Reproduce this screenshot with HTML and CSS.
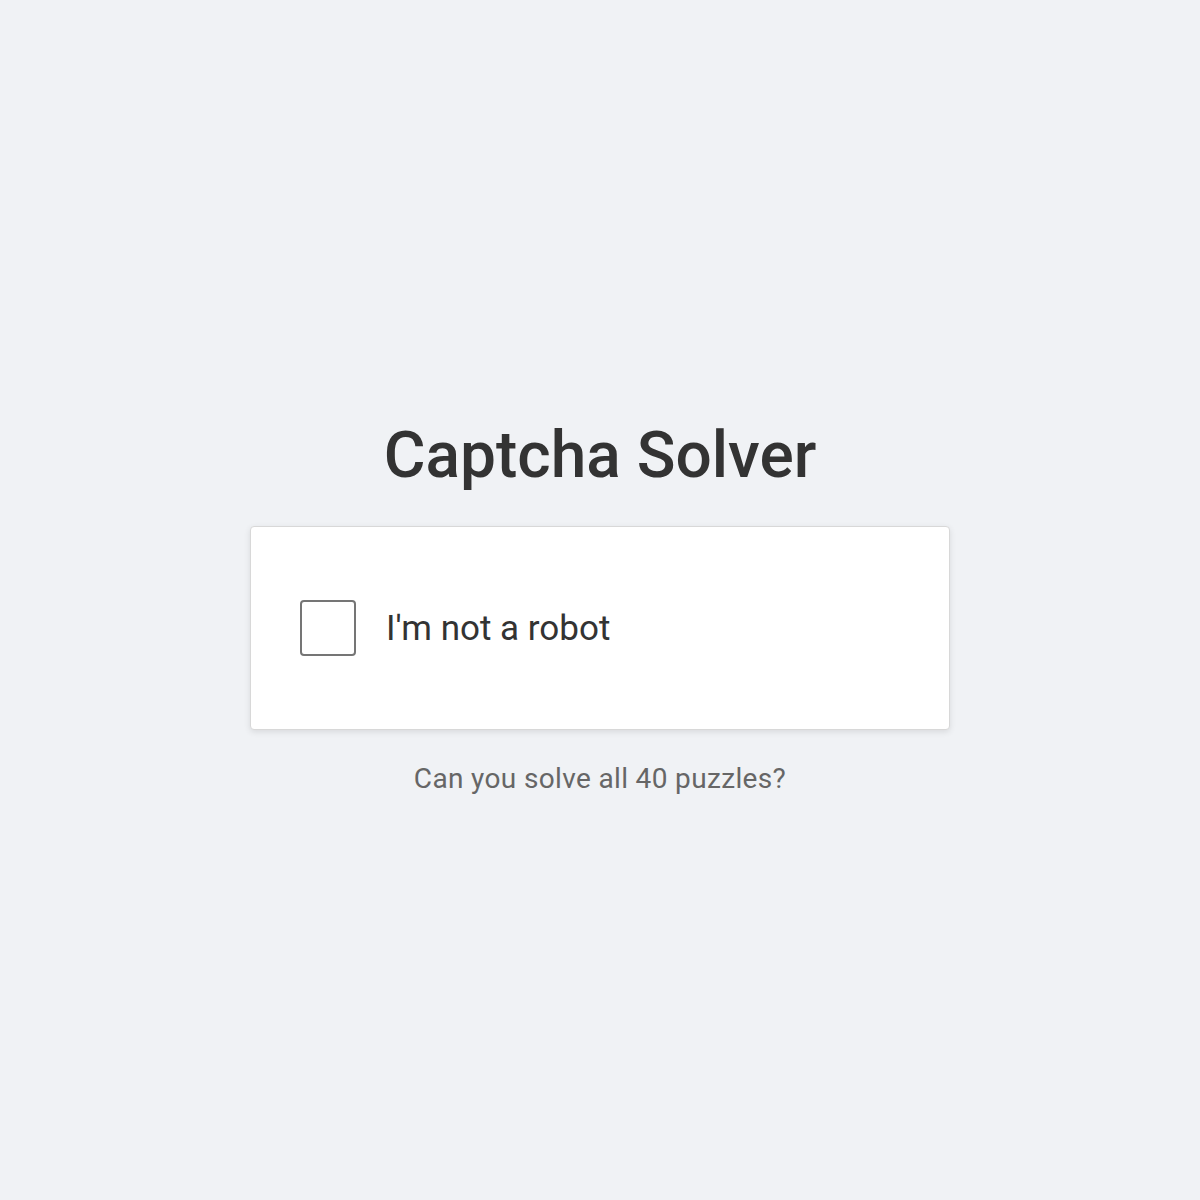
FILE: index.html
```html
<!DOCTYPE html>
<html lang="en">
<head>
    <meta charset="UTF-8">
    <meta name="viewport" content="width=device-width, initial-scale=1.0">
    <title>Captcha Solver</title>
    <link rel="stylesheet" href="styles.css">
</head>
<body>
    <main class="page">
        <h1 class="title">Captcha Solver</h1>

        <div class="captcha-box">
            <label class="captcha-check">
                <span class="checkbox"></span>
                <span class="check-label">I'm not a robot</span>
            </label>
        </div>

        <p class="subtitle">Can you solve all 40 puzzles?</p>
    </main>
</body>
</html>
```

FILE: styles.css
```css
* {
    margin: 0;
    padding: 0;
    box-sizing: border-box;
    font-family: Roboto, 'Noto Sans', sans-serif;
}

body {
    background-color: #f0f2f5;
}

.page {
    min-height: 100vh;
    display: flex;
    flex-direction: column;
    align-items: center;
    justify-content: center;
    padding-top: 13px;
}

.title {
    font-size: 64px;
    font-weight: 500;
    color: #333;
    margin-bottom: 33px;
}

.captcha-box {
    width: 700px;
    height: 204px;
    background-color: white;
    border: 1px solid #d8d8d8;
    border-radius: 4px;
    box-shadow: 0 2px 6px rgba(0, 0, 0, 0.1);
    display: flex;
    align-items: center;
    padding: 0 49px;
}

.captcha-check {
    display: flex;
    align-items: center;
    cursor: pointer;
}

.checkbox {
    width: 56px;
    height: 56px;
    border: 2px solid #757575;
    border-radius: 4px;
    background-color: white;
    margin-right: 30px;
}

.check-label {
    font-size: 35px;
    color: #333;
}

.subtitle {
    margin-top: 32px;
    font-size: 28px;
    letter-spacing: 0.35px;
    color: #666;
}
```
